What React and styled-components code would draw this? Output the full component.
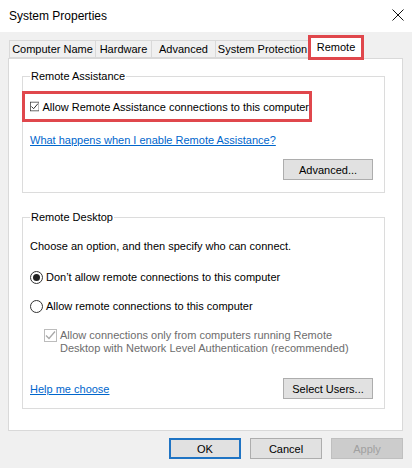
import React from "react";
import styled, { createGlobalStyle } from "styled-components";

const GlobalStyle = createGlobalStyle`
  body {
    margin: 0;
    font-family: "Liberation Sans", Arial, sans-serif;
    font-size: 11px;
    color: #000;
  }
`;

const tabs = [
  { label: "Computer Name", width: 87 },
  { label: "Hardware", width: 56 },
  { label: "Advanced", width: 64 },
  { label: "System Protection", width: 94 },
  { label: "Remote", width: 52, active: true },
];

const CheckIcon = ({ disabled }) => (
  <svg width="13" height="13" viewBox="0 0 13 13">
    <rect
      x="0.5"
      y="0.5"
      width="12"
      height="12"
      fill="#fff"
      stroke={disabled ? "#bcbcbc" : "#333"}
    />
    <path
      d="M2 6.5 L5 9.5 L11 2.5"
      fill="none"
      stroke={disabled ? "#a8a8a8" : "#222"}
      strokeWidth="1.3"
    />
  </svg>
);

const RadioIcon = ({ checked }) => (
  <svg width="13" height="13" viewBox="0 0 13 13">
    <circle cx="6.5" cy="6.5" r="6" fill="#fff" stroke="#333" />
    {checked && <circle cx="6.5" cy="6.5" r="3.5" fill="#222" />}
  </svg>
);

const App = () => {
  return (
    <>
      <GlobalStyle />
      <Window>
        <TitleBar>
          <Title>System Properties</Title>
          <Close>
            <svg width="12" height="12" viewBox="0 0 12 12">
              <path d="M0.5 0.5 L11.5 11.5 M11.5 0.5 L0.5 11.5" stroke="#111" strokeWidth="1" />
            </svg>
          </Close>
        </TitleBar>

        <Body>
          <TabList>
            {tabs.map((t) => (
              <Tab key={t.label} $width={t.width} $active={t.active}>
                {t.label}
              </Tab>
            ))}
          </TabList>

          <Panel>
            <Group>
              <Legend>Remote Assistance</Legend>
              <Highlight>
                <CheckIcon />
                <span>Allow Remote Assistance connections to this computer</span>
              </Highlight>
              <LinkRow>
                <Link>What happens when I enable Remote Assistance?</Link>
              </LinkRow>
              <ButtonRow>
                <Button $width={90}>Advanced...</Button>
              </ButtonRow>
            </Group>

            <Group $second>
              <Legend>Remote Desktop</Legend>
              <Text>Choose an option, and then specify who can connect.</Text>
              <Option $top={15}>
                <RadioIcon checked />
                <span>Don’t allow remote connections to this computer</span>
              </Option>
              <Option $top={13}>
                <RadioIcon />
                <span>Allow remote connections to this computer</span>
              </Option>
              <SubOption>
                <CheckIcon disabled />
                <span>
                  Allow connections only from computers running Remote
                  <br />
                  Desktop with Network Level Authentication (recommended)
                </span>
              </SubOption>
              <ButtonRow $between $top={23}>
                <Link>Help me choose</Link>
                <Button $width={90}>Select Users...</Button>
              </ButtonRow>
            </Group>
          </Panel>

          <Footer>
            <Button $width={72} $default>OK</Button>
            <Button $width={72}>Cancel</Button>
            <Button $width={72} $disabled>Apply</Button>
          </Footer>
        </Body>
      </Window>
    </>
  );
};

export default App;

const Window = styled.div`
  width: 412px;
  height: 468px;
  background: #f0f0f0;
  overflow: hidden;
`;

const TitleBar = styled.div`
  height: 32px;
  background: #fff;
  display: flex;
  align-items: center;
  justify-content: space-between;
  padding: 0 8px 0 9px;
`;

const Title = styled.div`
  font-size: 12px;
`;

const Close = styled.div`
  width: 12px;
  height: 12px;
  display: flex;
  margin-top: -2px;
`;

const Body = styled.div`
  padding: 4px 9px 0 8px;
`;

const TabList = styled.div`
  display: flex;
  align-items: flex-end;
  height: 22px;
  padding-left: 1px;
  position: relative;
  z-index: 1;
`;

const Tab = styled.div`
  box-sizing: border-box;
  width: ${(p) => (p.$active ? p.$width + 2 : p.$width)}px;
  height: ${(p) => (p.$active ? 23 : 18)}px;
  margin: ${(p) => (p.$active ? "0 -1px -1px" : "0")};
  display: flex;
  align-items: center;
  justify-content: center;
  padding-bottom: ${(p) => (p.$active ? 3 : 0)}px;
  background: ${(p) => (p.$active ? "#fff" : "#f0f0f0")};
  border: 1px solid #d9d9d9;
  border-bottom: ${(p) => (p.$active ? "none" : "1px solid #d9d9d9")};
  border-left: ${(p) => (p.$active ? "1px solid #d9d9d9" : "none")};
  &:first-child {
    border-left: 1px solid #d9d9d9;
  }
  outline: ${(p) => (p.$active ? "3px solid #e0474c" : "none")};
  outline-offset: -2px;
  white-space: nowrap;
`;

const Panel = styled.div`
  box-sizing: border-box;
  height: 373px;
  background: #fff;
  border: 1px solid #d9d9d9;
  padding: 10px 17px 0 13px;
`;

const Group = styled.fieldset`
  margin: ${(p) => (p.$second ? "17px" : "0")} 0 0 0;
  padding: 0 11px ${(p) => (p.$second ? 9 : 12)}px 7px;
  border: 1px solid #dcdcdc;
  min-width: 0;
`;

const Legend = styled.legend`
  padding: 0 1px;
  line-height: 14px;
`;

const Highlight = styled.div`
  box-sizing: border-box;
  width: 290px;
  height: 31px;
  margin: 8px 0 0 -8px;
  padding-left: 5px;
  border: 3px solid #e0474c;
  display: flex;
  align-items: center;
  gap: 3px;
  white-space: nowrap;
`;

const LinkRow = styled.div`
  margin-top: 10px;
  height: 16px;
  display: flex;
  align-items: center;
`;

const Link = styled.span`
  color: #0066cc;
  text-decoration: underline;
  white-space: nowrap;
`;

const ButtonRow = styled.div`
  margin-top: ${(p) => p.$top ?? 11}px;
  display: flex;
  align-items: center;
  justify-content: ${(p) => (p.$between ? "space-between" : "flex-end")};
`;

const Button = styled.div`
  box-sizing: border-box;
  width: ${(p) => p.$width}px;
  height: 21px;
  display: flex;
  align-items: center;
  justify-content: center;
  background: ${(p) => (p.$disabled ? "#cccccc" : "#e1e1e1")};
  color: ${(p) => (p.$disabled ? "#a0a0a0" : "#000")};
  border: ${(p) =>
    p.$default
      ? "2px solid #1f74c4"
      : p.$disabled
      ? "1px solid #bfbfbf"
      : "1px solid #adadad"};
  white-space: nowrap;
`;

const Text = styled.div`
  margin-top: 14px;
  height: 16px;
  line-height: 16px;
  white-space: nowrap;
`;

const Option = styled.div`
  margin-top: ${(p) => p.$top}px;
  height: 16px;
  display: flex;
  align-items: center;
  gap: 3px;
  white-space: nowrap;
`;

const SubOption = styled.div`
  margin-top: 15px;
  padding-left: 14px;
  display: flex;
  align-items: flex-start;
  gap: 3px;
  line-height: 13px;
  color: #6d6d6d;
  white-space: nowrap;
`;

const Footer = styled.div`
  display: flex;
  justify-content: flex-end;
  gap: 9px;
  margin-top: 7px;
`;
